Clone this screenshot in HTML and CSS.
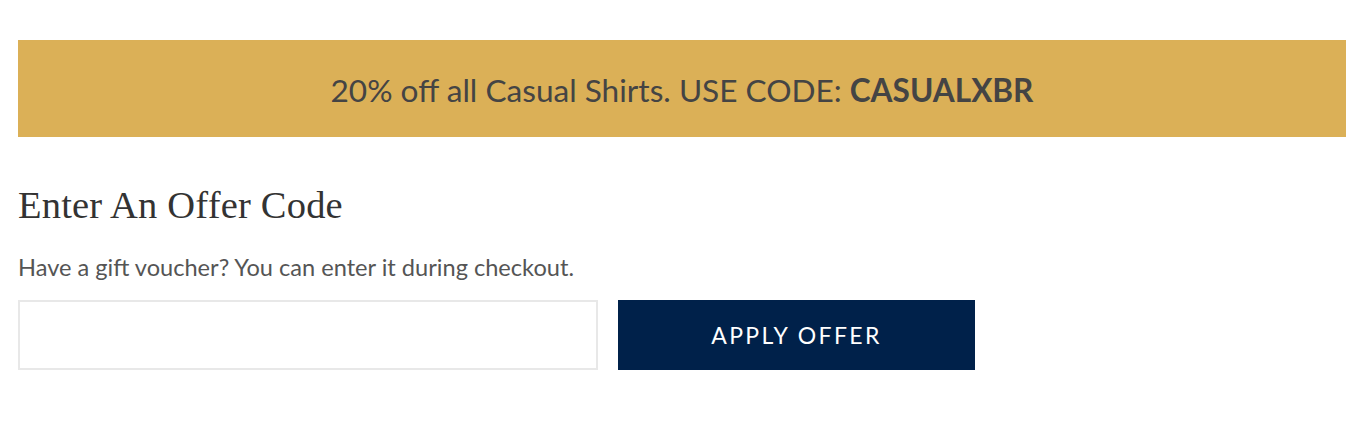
FILE: index.html
```html
<!DOCTYPE html>
<html lang="en">
<head>
  <meta charset="UTF-8" />
  <meta name="viewport" content="width=device-width, initial-scale=1.0"/>
  <title>Offer Code</title>
  <link rel="stylesheet" href="styles.css">
</head>
<body>
  <div class="promo">
    20% off all Casual Shirts. USE CODE: <strong>CASUALXBR</strong>
  </div>

  <div class="offer">
    <h2>Enter An Offer Code</h2>
    <p class="hint">Have a gift voucher? You can enter it during checkout.</p>
    <form class="offer-form">
      <input type="text" class="offer-input" />
      <button type="button" class="offer-btn">APPLY OFFER</button>
    </form>
  </div>
</body>
</html>
```

FILE: styles.css
```css
body {
  margin: 0;
  padding: 40px 20px 0 18px;
  font-family: Lato, "Open Sans", sans-serif;
  background: #fff;
  color: #555;
}
.promo {
  background: #dbb057;
  height: 97px;
  display: flex;
  align-items: center;
  justify-content: center;
  font-size: 31.6px;
  color: #444;
  padding-top: 3px;
  box-sizing: border-box;
}
.promo strong {
  font-weight: bold;
  margin-left: 8px;
}
.offer h2 {
  font-family: "Liberation Serif", serif;
  font-weight: normal;
  font-size: 38.5px;
  letter-spacing: 0.2px;
  color: #333;
  margin: 48px 0 0;
  line-height: 40px;
}
.hint {
  font-size: 23.6px;
  margin: 28px 0 0;
  line-height: 28px;
}
.offer-form {
  display: flex;
  gap: 20px;
  margin-top: 19px;
}
.offer-input {
  width: 580px;
  height: 70px;
  box-sizing: border-box;
  border: 2px solid #e8e8e8;
  margin: 0;
}
.offer-btn {
  width: 357px;
  height: 70px;
  border: none;
  background: #00214a;
  color: #fff;
  font-family: Lato, sans-serif;
  font-size: 23px;
  letter-spacing: 2.4px;
  padding: 0;
}
```
